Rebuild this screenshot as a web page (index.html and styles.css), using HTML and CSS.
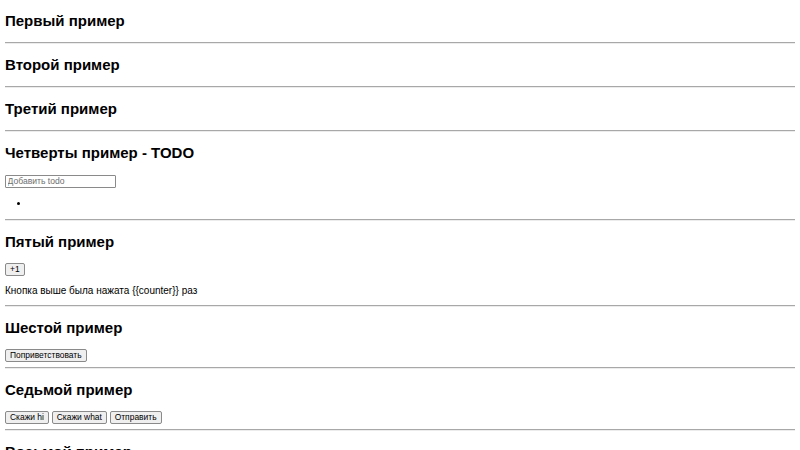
FILE: index.html
```html
<!DOCTYPE html>
<html lang="ru">
<head>
<meta charset="utf-8">
<title>Примеры</title>
<link rel="stylesheet" href="styles.css">
</head>
<body>
<div class="app">
  <section class="example">
    <h2 class="title">Первый пример</h2>
  </section>
  <hr class="sep">
  <section class="example">
    <h2 class="title">Второй пример</h2>
  </section>
  <hr class="sep">
  <section class="example">
    <h2 class="title">Третий пример</h2>
  </section>
  <hr class="sep">
  <section class="example">
    <h2 class="title">Четверты пример - TODO</h2>
    <input class="field" type="text" placeholder="Добавить todo">
    <ul class="list"><li class="item"></li></ul>
  </section>
  <hr class="sep">
  <section class="example">
    <h2 class="title">Пятый пример</h2>
    <div><button class="btn">+1</button></div>
    <p class="text">Кнопка выше была нажата {{counter}} раз</p>
  </section>
  <hr class="sep">
  <section class="example">
    <h2 class="title">Шестой пример</h2>
    <div><button class="btn">Поприветствовать</button></div>
  </section>
  <hr class="sep">
  <section class="example">
    <h2 class="title">Седьмой пример</h2>
    <div><button class="btn">Скажи hi</button> <button class="btn">Скажи what</button> <button class="btn">Отправить</button></div>
  </section>
  <hr class="sep">
  <section class="example">
    <h2 class="title">Восьмой пример</h2>
  </section>
</div>
</body>
</html>
```

FILE: styles.css
```css
html, body {
  background: #fff;
}
body {
  margin: 0 5px 5px;
  padding: 0;
  font-family: "Liberation Sans", Arial, sans-serif;
  font-size: 10px;
  color: #000;
}
.title {
  font-size: 15px;
  font-weight: bold;
  margin: 12px 0 12.9px;
  line-height: 17.25px;
}
.sep {
  margin: 5px 0;
  height: 0;
  border: 0;
  border-top: 1px solid #a8a8a8;
  border-bottom: 1px solid #ececec;
}
.field {
  display: block;
  box-sizing: border-box;
  width: 111px;
  height: 13px;
  margin: 0;
  padding: 0 1.5px;
  font-family: "Liberation Sans", Arial, sans-serif;
  font-size: 8.6px;
  border: 1px solid #8a8a8a;
  border-radius: 1px;
  background: #fff;
}
.field::placeholder {
  color: #6f6f6f;
}
.list {
  margin: 10px 0 9.5px;
  padding-left: 25px;
}
.item {
  min-height: 11.5px;
  line-height: 11.5px;
}
.btn {
  box-sizing: border-box;
  height: 13px;
  margin: 0;
  padding: 0 4px;
  font-family: "Liberation Sans", Arial, sans-serif;
  font-size: 8.45px;
  line-height: 11px;
  color: #000;
  background: #efefef;
  border: 1px solid #8a8a8a;
  border-radius: 2px;
  vertical-align: top;
}
.text {
  margin: 9px 0;
  line-height: 11.5px;
}
```
